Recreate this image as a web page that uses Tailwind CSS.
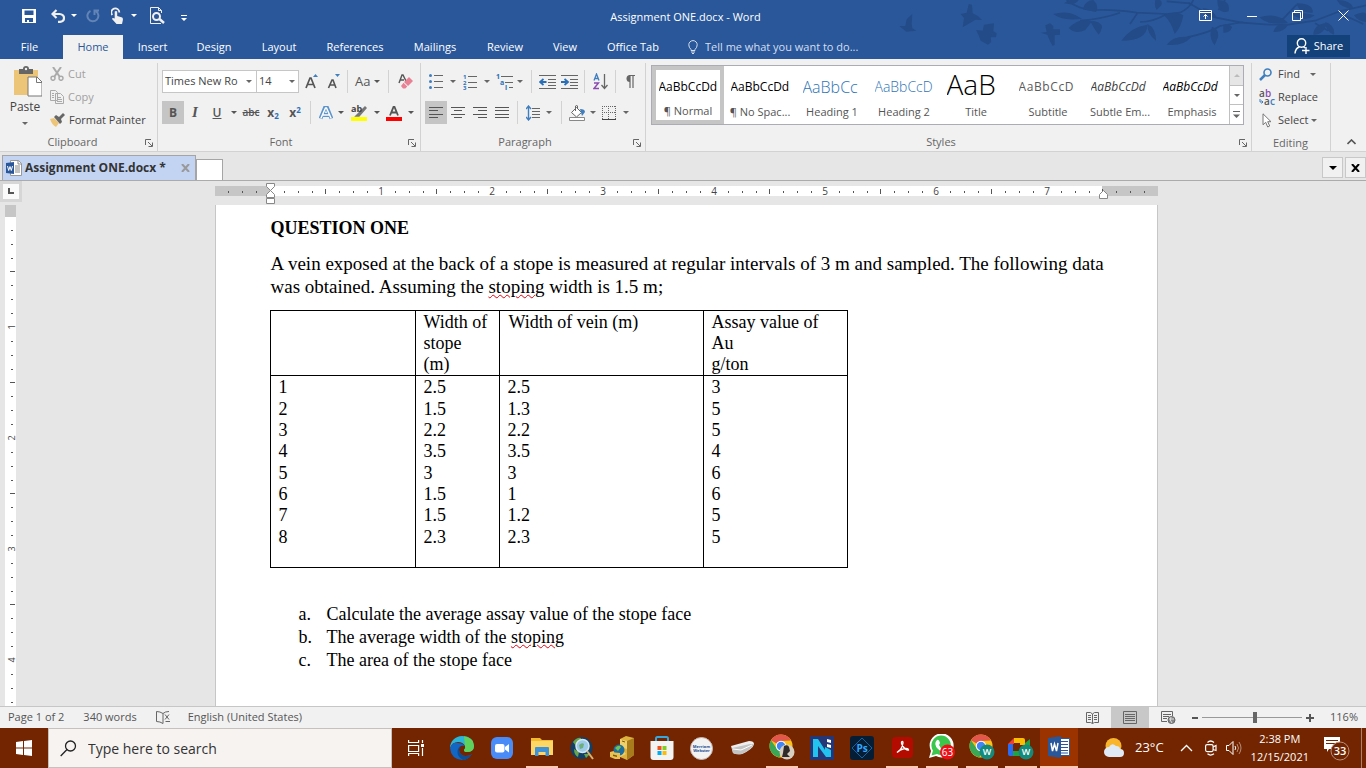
<!DOCTYPE html>
<html lang="en">
<head>
    <meta charset="UTF-8">
    <meta name="viewport" content="width=device-width, initial-scale=1.0">
    <title>Assignment ONE.docx - Word</title>
    <script src="https://cdn.jsdelivr.net/npm/@tailwindcss/browser@4"></script>
</head>
<body class="h-screen flex flex-col overflow-hidden bg-[#e6e6e6] text-[11px] text-[#444444] font-['Open_Sans',sans-serif]">

    <!-- Shared glyphs -->
    <svg class="hidden">
        <symbol id="caret" viewBox="0 0 6 3"><path d="M0 0h6L3 3z" fill="currentColor"/></symbol>
        <symbol id="launcher" viewBox="0 0 8 8"><path d="M.5 6V.5H6M3 3l4 4M7.500 3.500v4h-4" fill="none" stroke="#666" /></symbol>
        <symbol id="chrome" viewBox="0 0 24 24">
            <circle cx="12" cy="12" r="11.500" fill="#fbc116"/>
            <path d="M12 12L2 6.300A11.500 11.500 0 0 1 22 6.500L12 7z" fill="#e2564b"/>
            <path d="M2 6.300L8 15l4 3-1.500 5.400A11.500 11.500 0 0 1 2 6.300z" fill="#3aa757"/>
            <circle cx="12" cy="12" r="5.200" fill="#fff"/><circle cx="12" cy="12" r="4.200" fill="#4285f4"/>
        </symbol>
    </svg>

    <!-- Title bar and ribbon tabs -->
    <header class="relative shrink-0 bg-[#2a579a] text-white">
        <svg class="absolute right-0 top-0" width="506" height="59" viewBox="0 0 1518 177" fill="#224b87" aria-hidden="true">
            <path d="M118 78l18 0 4-20 17-17-2 30 2 14 12 7-16 2-14 1z"/>
            <path d="M302 42l18-4 6-26 10 2 2 26 16 8 12 12-20-1-12 8-26 15 4-28z"/>
            <path d="M348 90l20 2 4-18 30-4-2 24 10 6-2 12-16 0 2 14-10 8-22-12-6-16z"/>
            <path d="M542 98l18-2-4-20 14-6 10 8 0 10 20 0 0 16-16 2 0 28-6 4-8-14-8-20z"/>
            <g fill="none" stroke="#224b87" stroke-width="5">
                <path d="M620 0Q660 32 712 30T830 38L920 42 960 38Q990 24 1000 0"/>
                <path d="M660 62Q730 56 780 38M810 72l22-32M840 66q40 0 80-24M985 8q40 24 80 44l80 16 80 6h60l80-12 74-28 80-18"/>
                <path d="M980 112q70-14 100-34l70-12M1225 66L1270 56 1310 14M1365 70l40 22M920 4l70 6M1440 40l70 32M1075 30l20-30"/>
            </g>
            <path d="M580 42q36-10 64 2l22 12q-60 8-86-14zM612 10q20-16 44-10-10 18-44 10zM668 28q6-26 32-28 18 18 8 36zM626 84q34-34 70-20l-20 26q-30 14-50-6zM690 62q34 0 36 20-4 16-10 22-14-18-26-42z"/>
            <path d="M784 122q30-42 78-48 0 48-78 48zM862 72q26 12 26 50-26-18-26-50zM886 0q24-4 18 16l-14 14q-8-10-4-30zM912 46q36-16 58 0-6 36-26 56-10-36-32-56zM920 134q22-30 74-22-26 28-74 22zM1056 80q22 6 18 32l-10 24q-20-24-8-56zM1072 0q40 0 34 34-34 12-34-34zM1028 24q30 0 42 30-34 0-42-30zM1090 74q22-2 26 8-6 18-26 16z"/>
            <path d="M1198 52q50-16 86 16-60 10-86-16zM1240 96q6-28 46-24-14 26-46 24zM1310 10q50 0 48 28-44 2-48-28zM1290 40q40-6 74 6-30 24-74-6zM1360 104q0-30 40-36-6 36-40 36zM1396 66q30 10 26 38-24-8-26-38zM1430 0q44 0 50 26-36 0-50-26zM1482 46q30-14 36-4v24q-24-2-36-20z"/>
        </svg>

        <div class="relative flex h-[35px] items-center">
            <div class="flex flex-1 items-center pl-[22px] pb-1">
                <button aria-label="Save" class="mr-[15px]">
                    <svg width="14" height="14" viewBox="0 0 14 14"><path d="M0 0h14v14H0zM2.500 1.500V6h9V1.500zM3 9v4h2v-2h2v2h4V9z" fill="#fff" fill-rule="evenodd"/></svg>
                </button>
                <button aria-label="Undo" class="flex items-center gap-[6px] mr-[9px]">
                    <svg width="14" height="14" viewBox="0 0 14 14" fill="none" stroke="#f0f0f0" stroke-width="2.200"><path d="M5.500 1L1.500 5l4 4M2 5h6.500Q13 5.500 13 9t-4 3.800H7"/></svg>
                    <svg width="6" height="3"><use href="#caret"/></svg>
                </button>
                <button aria-label="Repeat" class="mr-[11px]">
                    <svg width="14" height="14" viewBox="0 0 14 14" fill="none" stroke="#6384b6" stroke-width="2"><path d="M4.500 1.800A5.500 5.500 0 1 0 10 2.200M8.500 6V1.500H13"/></svg>
                </button>
                <button aria-label="Touch/Mouse Mode" class="flex items-center gap-[8px] mr-[13px]">
                    <svg width="12" height="17" viewBox="0 0 12 17"><path d="M1.300 8A4 4 0 1 1 8.300 5.500" fill="none" stroke="#f0f0f0" stroke-width="1.800"/><path d="M3.700 4.500q1.300-1.200 2.500 0V9l5 1.500q1 .8.600 3L11 17H5.500L1 12q.2-1.600 2.700-.5z" fill="#f0f0f0"/></svg>
                    <svg width="6" height="3"><use href="#caret"/></svg>
                </button>
                <button aria-label="Print Preview" class="mr-[16px]">
                    <svg width="15" height="17" viewBox="0 0 15 17" fill="none" stroke="#f0f0f0"><path d="M11 16.500H.5V.5h8l3 3V6M8.500.5v3h3"/><circle cx="6.500" cy="9.500" r="3.500" stroke-width="2"/><path d="M9.500 12l4.500 4" stroke-width="2.500"/></svg>
                </button>
                <button aria-label="Customize Quick Access Toolbar" class="pt-1">
                    <svg width="6" height="6" viewBox="0 0 6 6" fill="#fff"><path d="M0 0h6v1H0zM0 3h6L3 6z"/></svg>
                </button>
            </div>
            <h1>Assignment ONE.docx - Word</h1>
            <div class="flex flex-1 items-center justify-end pr-[17px] pb-1 gap-[35px]">
                <button aria-label="Ribbon Display Options"><svg width="13" height="11" viewBox="0 0 13 11" fill="none" stroke="#fff"><path d="M.5.5h12v10H.5zM.5 2.500h12M6.500 9V4.500M4.500 6.500l2-2 2 2"/></svg></button>
                <button aria-label="Minimize"><svg width="10" height="11"><path d="M0 6.500h10" stroke="#fff"/></svg></button>
                <button aria-label="Restore"><svg width="11" height="11" viewBox="0 0 11 11" fill="none" stroke="#fff"><path d="M.5 2.500h8v8h-8zM2.500 2.500v-2h8v8h-2"/></svg></button>
                <button aria-label="Close"><svg width="11" height="11" viewBox="0 0 11 11"><path d="M.5.5l10 10M10.500.5l-10 10" stroke="#fff"/></svg></button>
            </div>
        </div>

        <nav class="relative flex h-[24px] items-stretch">
            <button class="w-[63px] pr-1">File</button>
            <button class="w-[60px] bg-[#f1f1f1] text-[#2a579a]">Home</button>
            <button class="w-[59px]">Insert</button>
            <button class="w-[64px]">Design</button>
            <button class="w-[66px]">Layout</button>
            <button class="w-[86px]">References</button>
            <button class="w-[74px]">Mailings</button>
            <button class="w-[66px]">Review</button>
            <button class="w-[54px]">View</button>
            <button class="w-[82px]">Office Tab</button>
            <label class="flex items-center gap-[7px] pl-[14px] text-[#d4dff0]">
                <svg width="10" height="14" viewBox="0 0 10 14" fill="none" stroke="#d4dff0"><path d="M3 9.500Q.8 7.500.8 4.800a4.200 4.200 0 0 1 8.400 0Q9.200 7.500 7 9.500v1H3zM3 12h4M4 13.500h2"/></svg>
                <input type="text" placeholder="Tell me what you want to do..." aria-label="Tell me what you want to do" class="w-[180px] bg-transparent outline-none placeholder:text-[#d4dff0]">
            </label>
            <button class="ml-auto mr-[16px] mb-[2px] flex w-[63px] items-center justify-center gap-1 bg-[#13417a]">
                <svg width="16" height="16" viewBox="0 0 16 16" fill="none" stroke="#fff" stroke-width="1.400"><circle cx="7.500" cy="5" r="4.200"/><path d="M1 15.500Q1.500 10 5.500 9M9.500 8.800L11 10M8 12.500h7.500M12 9v7"/></svg>
                Share
            </button>
        </nav>
    </header>

    <!-- Ribbon -->
    <section class="flex h-[93px] shrink-0 border-b border-[#d2d2d2] bg-[#f1f1f1] pt-1 text-[#444444]">

        <div class="flex w-[158px] flex-col border-r border-[#d2d2d2]">
            <div class="flex flex-1">
                <button class="flex w-[50px] flex-col items-center self-start">
                    <svg class="mt-[3px] ml-1" width="29" height="31" viewBox="0 0 29 31"><path d="M1 4h24v25H1z" fill="#edc579"/><path d="M6 3h4q0-3 3-3t3 3h4v5H6z" fill="#666"/><circle cx="13" cy="3" r="1.200" fill="#f1f1f1"/><path d="M15 11h9l5 5v14H15z" fill="#fff" stroke="#777"/><path d="M23.500 11v5.500H29" fill="none" stroke="#777"/></svg>
                    <span class="text-[12px] leading-[20px]">Paste</span>
                    <svg class="mt-[5px] text-[#666]" width="6" height="3"><use href="#caret"/></svg>
                </button>
                <div class="flex flex-col pt-[2px] leading-[18px]">
                    <button class="flex h-[18px] mb-[5px] items-center gap-1 text-[#a0a0a0]">
                        <svg width="14" height="14" viewBox="0 0 14 14" fill="none" stroke="#aaa" stroke-width="1.500"><path d="M3 0l6.500 9.500M11 0L4.500 9.500" stroke-width="2"/><circle cx="3" cy="11.300" r="2"/><circle cx="11" cy="11.300" r="2"/></svg>Cut
                    </button>
                    <button class="flex h-[18px] mb-[5px] items-center gap-1 text-[#a0a0a0]">
                        <svg width="14" height="14" viewBox="0 0 14 14" fill="#f1f1f1" stroke="#aaa"><path d="M.5.5h5l2 2v8h-7zM5.500 3.500h5l3 3v7h-8zM2 3.500h2M2 5.500h2M2 7.500h2M7 7.500h4M7 9.500h5M7 11.500h5"/></svg>Copy
                    </button>
                    <button class="flex h-[18px] items-center gap-1 whitespace-nowrap">
                        <svg width="15" height="14" viewBox="0 0 15 14"><path d="M0 6l4-1 5 5-3 4q-4-2-6-8z" fill="#edc579"/><path d="M4 4l2-2 3 2 4-4 2 2-4 4 1 3-2 2z" fill="#666"/></svg>Format Painter
                    </button>
                </div>
            </div>
            <div class="flex h-[17px] items-center text-[#666]"><span class="flex-1 text-center">Clipboard</span><svg class="mr-1" width="8" height="8"><use href="#launcher"/></svg></div>
        </div>

        <div class="flex w-[263px] flex-col border-r border-[#d2d2d2] pl-1">
            <div class="flex flex-1 flex-col pt-[7px] gap-[8px]">
                <div class="flex h-[23px] items-center">
                    <label class="relative flex h-[23px] w-[95px] items-center border border-[#c6c6c6] bg-white">
                        <select aria-label="Font" class="h-full w-[80px] appearance-none overflow-hidden bg-transparent pl-[2px] outline-none"><option>Times New Ro</option></select>
                        <svg class="ml-[3px] text-[#666]" width="6" height="3"><use href="#caret"/></svg>
                    </label>
                    <label class="-ml-px mr-[2px] flex h-[23px] w-[43px] items-center border border-[#c6c6c6] bg-white">
                        <select aria-label="Font Size" class="h-full w-[30px] appearance-none bg-transparent pl-[2px] outline-none"><option>14</option></select>
                        <svg class="ml-[2px] text-[#666]" width="6" height="3"><use href="#caret"/></svg>
                    </label>
                    <button aria-label="Grow Font" class="flex w-[22px] justify-center"><svg width="14" height="15" viewBox="0 0 14 15"><path d="M1 14L5 4h1l4 10M2.500 10.500h6" fill="none" stroke="#555" stroke-width="1.700"/><path d="M8 3h5l-2.500-3z" fill="#3f7fbf"/></svg></button>
                    <button aria-label="Shrink Font" class="flex w-[22px] justify-center"><svg width="14" height="15" viewBox="0 0 14 15"><path d="M1.500 14L5 6h1l3 8M3 11h5" fill="none" stroke="#555" stroke-width="1.600"/><path d="M8 0h5l-2.500 3z" fill="#3f7fbf"/></svg></button>
                    <span class="ml-[2px] h-[23px] w-px bg-[#d2d2d2]"></span>
                    <button class="flex items-center gap-1 pl-[7px] text-[13px] text-[#555]">Aa<svg width="6" height="3"><use href="#caret"/></svg></button>
                    <span class="ml-[8px] h-[23px] w-px bg-[#d2d2d2]"></span>
                    <button aria-label="Clear Formatting" class="ml-[9px]"><svg width="15" height="16" viewBox="0 0 15 16"><path d="M1 9L4 1h1l3 6M2 6h4" fill="none" stroke="#555" stroke-width="1.400"/><path d="M11 3l4 4-5 5-4-4zM5.500 8.700l3.800 3.800-2 2H5l-2-2.500z" fill="#e98195"/></svg></button>
                </div>
                <div class="flex h-[23px] items-center text-[12px] font-semibold text-[#555]">
                    <button class="h-[23px] w-[22px] bg-[#c5c5c5] font-bold">B</button>
                    <button class="w-[22px] font-['Liberation_Serif',serif] text-[15px] italic">I</button>
                    <button class="w-[22px] underline">U</button>
                    <button aria-label="Underline style" class="flex w-[12px] justify-center"><svg width="6" height="3"><use href="#caret"/></svg></button>
                    <button class="w-[22px] text-[10px] line-through">abc</button>
                    <button class="w-[22px] font-bold">x<sub class="text-[8px] text-[#2a6fb5]">2</sub></button>
                    <button class="w-[22px] font-bold">x<sup class="text-[8px] text-[#2a6fb5]">2</sup></button>
                    <span class="ml-[4px] mr-[4px] h-[23px] w-px bg-[#d2d2d2]"></span>
                    <button aria-label="Text Effects" class="flex w-[22px] justify-center"><svg width="14" height="14" viewBox="0 0 14 14" fill="none"><path d="M1.500 12.500L6 1.500h2l4.500 11M4 9h6" stroke="#5b93cc" stroke-width="3.800"/><path d="M1.800 12.500L6.500 2h1l4.700 10.500M4 9h6" stroke="#fff" stroke-width="1.500"/></svg></button>
                    <button aria-label="Text Effects options" class="flex w-[8px] justify-center"><svg width="6" height="3"><use href="#caret"/></svg></button>
                    <button aria-label="Text Highlight Color" class="flex w-[28px] justify-center"><svg width="16" height="16" viewBox="0 0 16 16"><path d="M6 10l8-8 1 1-7 8H5z" stroke="#777" stroke-width="1.500" fill="#777"/><text x="0" y="7" font-size="9" font-weight="700" fill="#444">ab</text><path d="M0 12h16v4H0z" fill="#ff0"/></svg></button>
                    <button aria-label="Highlight colors" class="flex w-[8px] justify-center"><svg width="6" height="3"><use href="#caret"/></svg></button>
                    <button aria-label="Font Color" class="flex w-[26px] justify-center"><svg width="16" height="16" viewBox="0 0 16 16"><path d="M4 10.500L7.500 2h1L12 10.500M5 7.500h6" fill="none" stroke="#555" stroke-width="1.800"/><path d="M0 12h16v4H0z" fill="#f00"/></svg></button>
                    <button aria-label="Font colors" class="flex w-[8px] justify-center"><svg width="6" height="3"><use href="#caret"/></svg></button>
                </div>
            </div>
            <div class="flex h-[17px] items-center text-[#666]"><span class="flex-1 pr-2 text-center">Font</span><svg class="mr-1" width="8" height="8"><use href="#launcher"/></svg></div>
        </div>

        <div class="flex w-[225px] flex-col border-r border-[#d2d2d2] pl-1">
            <div class="flex flex-1 flex-col pt-[7px] gap-[8px] text-[#666]">
                <div class="flex h-[23px] items-center">
                    <button aria-label="Bullets" class="ml-[4px] flex items-center gap-[7px]"><svg width="14" height="15" viewBox="0 0 14 15"><path d="M5 1.500h9M5 7.500h9M5 13.500h9" stroke="#666"/><g fill="#3f7fbf"><circle cx="1.500" cy="1.500" r="1.500"/><circle cx="1.500" cy="7.500" r="1.500"/><circle cx="1.500" cy="13.500" r="1.500"/></g></svg><svg width="6" height="3"><use href="#caret"/></svg></button>
                    <button aria-label="Numbering" class="ml-[7px] flex items-center gap-[7px]"><svg width="14" height="16" viewBox="0 0 14 16"><path d="M5 2.500h9M5 8.500h9M5 13.500h9" stroke="#666"/><g fill="#2a6fb5" font-size="6" font-weight="700"><text x="0" y="5">1</text><text x="0" y="10.500">2</text><text x="0" y="16">3</text></g></svg><svg width="6" height="3"><use href="#caret"/></svg></button>
                    <button aria-label="Multilevel List" class="ml-[6px] flex items-center gap-[4px]"><svg width="17" height="16" viewBox="0 0 17 16"><path d="M5 2.500h12M9 8.500h8M13 13.500h4" stroke="#666"/><g fill="#2a6fb5" font-size="7" font-weight="700"><text x="0" y="5">1</text><text x="4" y="10.500">a</text><text x="9" y="16">i</text></g></svg><svg width="6" height="3"><use href="#caret"/></svg></button>
                    <span class="ml-[8px] h-[23px] w-px bg-[#d2d2d2]"></span>
                    <button aria-label="Decrease Indent" class="ml-[7px]"><svg width="17" height="14" viewBox="0 0 17 14"><path d="M0 .5h17M9 4.500h8M9 7.500h8M9 10.500h8M0 13.500h17" stroke="#666"/><path d="M7.500 7H2M4.500 4L1 7l3.500 3" stroke="#2a6fb5" stroke-width="1.800" fill="none"/></svg></button>
                    <button aria-label="Increase Indent" class="ml-[5px]"><svg width="17" height="14" viewBox="0 0 17 14"><path d="M0 .5h17M9 4.500h8M9 7.500h8M9 10.500h8M0 13.500h17" stroke="#666"/><path d="M0 7h5.500M3.500 4L7 7l-3.500 3" stroke="#2a6fb5" stroke-width="1.800" fill="none"/></svg></button>
                    <span class="ml-[6px] h-[23px] w-px bg-[#d2d2d2]"></span>
                    <button aria-label="Sort" class="ml-[8px]"><svg width="15" height="17" viewBox="0 0 15 17" fill="none"><path d="M1 7.500L3.500 1 6 7.500M2 5.500h3" stroke="#3f7fbf" stroke-width="1.300"/><path d="M1 10h4.500L1 15.500h5" stroke="#8a4bb0" stroke-width="1.400"/><path d="M11.500 1v14M8.500 12l3 3.500 3-3.500" stroke="#666" stroke-width="1.300"/></svg></button>
                    <span class="ml-[7px] h-[23px] w-px bg-[#d2d2d2]"></span>
                    <button aria-label="Show/Hide" class="ml-[9px]"><svg width="10" height="13" viewBox="0 0 10 13"><path d="M4 .5h6M5 0v13M8 0v13" stroke="#666" stroke-width="1.200"/><path d="M5 0a3.500 3.500 0 0 0 0 7z" fill="#666"/></svg></button>
                </div>
                <div class="flex h-[23px] items-center">
                    <button aria-label="Align Left" class="flex h-[23px] w-[22px] items-center justify-center bg-[#c5c5c5]"><svg width="14" height="11"><path d="M0 .5h14M0 3.500h9M0 7.500h14M0 10.500h9" stroke="#555"/></svg></button>
                    <button aria-label="Center" class="flex w-[22px] justify-center"><svg width="14" height="11"><path d="M0 .5h14M3 3.500h8M0 7.500h14M3 10.500h8" stroke="#555"/></svg></button>
                    <button aria-label="Align Right" class="flex w-[22px] justify-center"><svg width="14" height="11"><path d="M0 .5h14M5 3.500h9M0 7.500h14M5 10.500h9" stroke="#555"/></svg></button>
                    <button aria-label="Justify" class="flex w-[22px] justify-center"><svg width="14" height="11"><path d="M0 .5h14M0 3.500h14M0 7.500h14M0 10.500h14" stroke="#555"/></svg></button>
                    <span class="ml-[4px] h-[23px] w-px bg-[#d2d2d2]"></span>
                    <button aria-label="Line Spacing" class="ml-[8px] flex items-center gap-[6px]"><svg width="14" height="16" viewBox="0 0 14 16" fill="none"><path d="M6 3.500h8M6 6.500h8M6 9.500h8M6 12.500h8" stroke="#666"/><path d="M2.500 1v14M0 4l2.500-3L5 4M0 12l2.500 3L5 12" stroke="#3f7fbf" stroke-width="1.400"/></svg><svg width="6" height="3"><use href="#caret"/></svg></button>
                    <span class="ml-[9px] h-[23px] w-px bg-[#d2d2d2]"></span>
                    <button aria-label="Shading" class="ml-[7px] flex items-center gap-[4px]"><svg width="17" height="16" viewBox="0 0 17 16"><path d="M2.500 7.500l5-5 5 5-5 4.500z" fill="#fff" stroke="#666"/><path d="M6.500 6V1q1.500-1.500 2 0v3" fill="none" stroke="#666"/><path d="M11 4q5 0 5 3l-3 4z" fill="#3f7fbf"/><path d="M.5 12.500h15v3H.5z" fill="#fff" stroke="#888"/></svg><svg width="6" height="3"><use href="#caret"/></svg></button>
                    <button aria-label="Borders" class="ml-[6px] flex items-center gap-[7px]"><svg width="14" height="14" viewBox="0 0 14 14"><path d="M.5 0v13M13.500 0v13M6.500 0v13M0 .5h14M0 6.500h14" stroke="#666" stroke-dasharray="1 1"/><path d="M0 13.500h14" stroke="#444"/></svg><svg width="6" height="3"><use href="#caret"/></svg></button>
                </div>
            </div>
            <div class="flex h-[17px] items-center text-[#666]"><span class="flex-1 pr-2 text-center">Paragraph</span><svg class="mr-1" width="8" height="8"><use href="#launcher"/></svg></div>
        </div>

        <div class="flex min-w-0 flex-1 flex-col border-r border-[#d2d2d2] pl-[5px] pt-[2px]">
            <div class="mr-[7px] flex h-[60px] border border-[#abadb3] bg-white text-[#666]">
                <div class="flex flex-1 overflow-hidden leading-[18px] text-black">
                    <button class="flex w-[72px] flex-col items-center border-4 border-[#c5c5c5] pt-[8px]"><span class="h-[25px] w-[59px] overflow-hidden text-left text-[12px] whitespace-nowrap">AaBbCcDd</span><span class="text-[#555]">¶ Normal</span></button>
                    <button class="flex w-[72px] flex-col items-center pt-[12px]"><span class="h-[25px] w-[59px] overflow-hidden text-left text-[12px] whitespace-nowrap">AaBbCcDd</span><span class="whitespace-nowrap text-[#555]">¶ No Spac...</span></button>
                    <button class="flex w-[72px] flex-col items-center pt-[12px]"><span class="h-[25px] w-[59px] overflow-hidden text-left text-[16px] font-light whitespace-nowrap text-[#2e74b5]">AaBbCc</span><span class="text-[#555]">Heading 1</span></button>
                    <button class="flex w-[72px] flex-col items-center pt-[12px]"><span class="h-[25px] w-[59px] overflow-hidden text-left text-[14px] font-light whitespace-nowrap text-[#2e74b5]">AaBbCcD</span><span class="text-[#555]">Heading 2</span></button>
                    <button class="flex w-[72px] flex-col items-center"><span class="h-[37px] w-[59px] overflow-hidden text-left text-[28px] leading-[36px] font-light whitespace-nowrap">AaB</span><span class="text-[#555]">Title</span></button>
                    <button class="flex w-[72px] flex-col items-center pt-[12px]"><span class="h-[25px] w-[59px] overflow-hidden text-left text-[12px] tracking-wider whitespace-nowrap text-[#5a5a5a]">AaBbCcD</span><span class="text-[#555]">Subtitle</span></button>
                    <button class="flex w-[72px] flex-col items-center pt-[12px]"><span class="h-[25px] w-[59px] overflow-hidden text-left text-[12px] italic whitespace-nowrap text-[#404040]">AaBbCcDd</span><span class="whitespace-nowrap text-[#555]">Subtle Em...</span></button>
                    <button class="flex w-[72px] flex-col items-center pt-[12px]"><span class="h-[25px] w-[59px] overflow-hidden text-left text-[12px] italic whitespace-nowrap">AaBbCcDd</span><span class="text-[#555]">Emphasis</span></button>
                </div>
                <div class="flex w-[14px] flex-col divide-y divide-[#c0c0c0] border-l border-[#c0c0c0]">
                    <button aria-label="Row up" class="flex flex-1 items-center justify-center bg-[#e6e6e6] text-[#bbb]"><svg class="rotate-180" width="6" height="3"><use href="#caret"/></svg></button>
                    <button aria-label="Row down" class="flex flex-1 items-center justify-center"><svg width="6" height="3"><use href="#caret"/></svg></button>
                    <button aria-label="More styles" class="flex flex-1 items-center justify-center"><svg width="7" height="7" viewBox="0 0 7 7" fill="#666"><path d="M0 0h7v1H0zM0 3.500h7L3.500 7z"/></svg></button>
                </div>
            </div>
            <div class="mt-auto flex h-[17px] items-center text-[#666]"><span class="flex-1 pr-2 text-center">Styles</span><svg class="mr-1" width="8" height="8"><use href="#launcher"/></svg></div>
        </div>

        <div class="flex w-[79px] flex-col border-r border-[#d2d2d2] pl-[7px]">
            <div class="flex flex-1 flex-col gap-[5px] pt-[2px]">
                <button class="flex h-[18px] items-center gap-[5px]"><svg width="14" height="13" viewBox="0 0 14 13" fill="none" stroke="#3f7fbf"><circle cx="8.500" cy="4.500" r="3.500" stroke-width="1.600"/><path d="M6 7L1 12" stroke-width="2.500"/></svg>Find<svg class="ml-[5px] text-[#666]" width="6" height="3"><use href="#caret"/></svg></button>
                <button class="flex h-[18px] items-center gap-[2px]"><svg width="17" height="17" viewBox="0 0 17 17" font-size="10" font-weight="600"><text x="0" y="8" fill="#555">a</text><text x="6" y="8" fill="#8a4bb0">b</text><text x="5" y="16" fill="#555">a</text><text x="11" y="16" fill="#3f7fbf">c</text><path d="M1 10v3h3M2.500 11.500L4 13l-1.500 1.500" fill="none" stroke="#3f7fbf"/></svg>Replace</button>
                <button class="flex h-[18px] items-center gap-[5px] pl-[3px]"><svg width="11" height="15" viewBox="0 0 11 15"><path d="M1 .8v11l2.700-2.500 2 4.700 2-1-2-4.300H9z" fill="#fff" stroke="#777"/></svg>Select<svg class="-ml-[2px] text-[#666]" width="6" height="3"><use href="#caret"/></svg></button>
            </div>
            <div class="h-[17px] pr-[8px] text-center leading-[17px] text-[#666]">Editing</div>
        </div>
        <button aria-label="Collapse the Ribbon" class="flex w-[35px] items-end justify-center pb-[6px] pl-[6px]"><svg width="9" height="6"><path d="M.5 5l4-4 4 4" fill="none" stroke="#555" stroke-width="1.600"/></svg></button>
    </section>

    <!-- Open document tabs -->
    <nav class="flex h-[29px] shrink-0 items-end border-b border-[#ababab] pl-[2px]">
        <div class="flex h-[25px] w-[194px] items-center border border-b-0 border-[#a5a5a5] bg-[#c2d4f2] pl-[3px] text-[12px] font-bold text-[#333]">
            <svg width="16" height="16" viewBox="0 0 16 16"><path d="M4.500.5h8l3 3v12h-11z" fill="#fff" stroke="#999"/><path d="M12 .5V4h3.500M9 6h5M9 8h5M9 10h5M9 12h5" stroke="#888" fill="none"/><path d="M0 3l8-1v12l-8-1z" fill="#2a579a"/><path d="M1.500 6l1.200 4.500L4 6.500l1.300 4L6.500 6" fill="none" stroke="#fff"/></svg>
            <button class="ml-[3px] whitespace-nowrap">Assignment ONE.docx *</button>
            <button aria-label="Close document" class="mr-[5px] ml-auto"><svg width="9" height="8"><path d="M1 0l7 8M8 0L1 8" stroke="#999" stroke-width="2"/></svg></button>
        </div>
        <button aria-label="New document" class="h-[21px] w-[27px] border border-b-0 border-[#a5a5a5] bg-white"></button>
        <button aria-label="Document list" class="mr-[2px] mb-[2px] ml-auto flex h-[21px] w-[21px] items-center justify-center border border-[#c8c8c8] bg-[#f1f1f1] text-black"><svg width="8" height="4"><use href="#caret"/></svg></button>
        <button aria-label="Close tab" class="mb-[2px] flex h-[21px] w-[21px] items-center justify-center border border-[#c8c8c8] bg-[#f1f1f1]"><svg width="9" height="8"><path d="M1 0l7 8M8 0L1 8" stroke="#000" stroke-width="2"/></svg></button>
    </nav>

    <!-- Document area: vertical ruler on the left, page in the middle -->
    <main class="flex min-h-0 flex-1">
        <div class="flex w-[22px] shrink-0 flex-col">
            <button aria-label="Tab selector" class="mb-[3px] flex h-[21px] w-[22px] items-center justify-center border-3 border-[#d6d6d6] bg-[#fafafa]"><svg width="6" height="6"><path d="M1 0v5h5" fill="none" stroke="#555" stroke-width="2"/></svg></button>
            <svg class="ml-[5px]" width="11" height="502" aria-hidden="true">
                <defs>
                    <pattern id="vticks" width="11" height="111" y="11" patternUnits="userSpaceOnUse">
                        <path d="M6 14.500h2M6 28.500h2M6 42.500h2M5 55.500h5M6 69.500h2M6 83.500h2M6 97.500h2" stroke="#555"/>
                    </pattern>
                </defs>
                <path d="M0 0h11v502H0z" fill="#fff"/><path d="M0 0h11v12H0z" fill="#c6c6c6"/>
                <path d="M0 13h11v489H0z" fill="url(#vticks)"/>
                <g font-size="9" fill="#444" text-anchor="middle">
                    <text transform="translate(10 122) rotate(-90)">1</text>
                    <text transform="translate(10 233) rotate(-90)">2</text>
                    <text transform="translate(10 344) rotate(-90)">3</text>
                    <text transform="translate(10 455) rotate(-90)">4</text>
                </g>
            </svg>
        </div>

        <div class="flex min-w-0 flex-1 flex-col items-center pr-[16px]">
            <svg class="shrink-0" width="943" height="24" aria-hidden="true">
                <defs>
                    <pattern id="hticks" x="55" width="111" height="24" patternUnits="userSpaceOnUse">
                        <path d="M14.500 10v2M28.500 10v2M42.500 10v2M55.500 8v5M69.500 10v2M83.500 10v2M97.500 10v2" stroke="#555"/>
                    </pattern>
                </defs>
                <path d="M0 5h943v10H0z" fill="#c6c6c6"/><path d="M55 5h832v10H55z" fill="#fff"/>
                <path d="M0 5h943v10H0z" fill="url(#hticks)"/>
                <g font-size="10" fill="#444" text-anchor="middle">
                    <text x="166" y="14">1</text><text x="277" y="14">2</text><text x="388" y="14">3</text><text x="499" y="14">4</text>
                    <text x="610" y="14">5</text><text x="721" y="14">6</text><text x="832" y="14">7</text>
                </g>
                <path d="M51.500 2.500h8v3l-4 4-4-4zM51.500 16.500v-3l4-4 4 4v3zM51.500 17.500h8v5h-8zM884.500 17.500v-4l4-4 4 4v4z" fill="#fff" stroke="#888"/>
            </svg>
            <article class="min-h-0 w-[943px] flex-1 overflow-hidden border-x border-[#c6c6c6] bg-white px-[55px] pt-[12px] font-['Liberation_Serif',serif] text-[19px] leading-[23px] text-black">
                <h2 class="mb-[12px] text-[18px] font-bold">QUESTION ONE</h2>
                <p class="whitespace-nowrap">A vein exposed at the back of a stope is measured at regular intervals of 3 m and sampled. The following data<br>
                    was obtained. Assuming the <span class="underline decoration-red-600 decoration-wavy decoration-1">stoping</span> width is 1.5 m;</p>
                <table class="-ml-px mt-[12px] w-[578px] table-fixed border-collapse border border-black text-left align-top text-[18px] leading-[21px]">
                    <colgroup><col class="w-[145px]"><col class="w-[84px]"><col class="w-[204px]"><col class="w-[144px]"></colgroup>
                    <thead>
                        <tr class="h-[65px] border-b border-black align-top">
                            <th class="border-r border-black"></th>
                            <th class="border-r border-black pt-px pl-[8px] font-normal">Width of<br>stope<br>(m)</th>
                            <th class="border-r border-black pt-px pl-[9px] font-normal">Width of vein (m)</th>
                            <th class="pt-px pl-[8px] font-normal">Assay value of<br>Au<br>g/ton</th>
                        </tr>
                    </thead>
                    <tbody class="leading-[19px] [&_td]:border-r [&_td]:border-black [&_td]:pt-[2px] [&_td]:pl-[8px] [&_tr]:h-[21px] [&_tr:nth-child(3n+1)]:h-[22px]">
                        <tr><td>1</td><td>2.5</td><td>2.5</td><td>3</td></tr>
                        <tr><td>2</td><td>1.5</td><td>1.3</td><td>5</td></tr>
                        <tr><td>3</td><td>2.2</td><td>2.2</td><td>5</td></tr>
                        <tr><td>4</td><td>3.5</td><td>3.5</td><td>4</td></tr>
                        <tr><td>5</td><td>3</td><td>3</td><td>6</td></tr>
                        <tr><td>6</td><td>1.5</td><td>1</td><td>6</td></tr>
                        <tr><td>7</td><td>1.5</td><td>1.2</td><td>5</td></tr>
                        <tr><td>8</td><td>2.3</td><td>2.3</td><td>5</td></tr>
                        <tr><td></td><td></td><td></td><td></td></tr>
                    </tbody>
                </table>
                <ol class="mt-[35px] pl-[28px] text-[18px]">
                    <li class="flex"><span class="w-[28px]">a.</span>Calculate the average assay value of the stope face</li>
                    <li class="flex"><span class="w-[28px]">b.</span><span>The average width of the <span class="underline decoration-red-600 decoration-wavy decoration-1">stoping</span></span></li>
                    <li class="flex"><span class="w-[28px]">c.</span>The area of the stope face</li>
                </ol>
            </article>
        </div>
    </main>

    <!-- Status bar -->
    <footer class="flex h-[22px] shrink-0 items-center border-t border-[#c6c6c6] bg-[#f1f1f1] pl-[8px] text-[#555]">
        <span class="mr-[19px]">Page 1 of 2</span>
        <span class="mr-[19px]">340 words</span>
        <svg class="mr-[17px]" width="15" height="13" viewBox="0 0 15 13" fill="none" stroke="#666"><path d="M7 2.500Q4 .5.500.5v10Q4 10.500 7 12.500M7 12.500v-10Q9 .5 13 .5M9.500 10.500H14M9 3.500l4 5M13 3.500l-4 5"/></svg>
        <span>English (United States)</span>
        <div class="ml-auto flex h-full items-center">
            <button aria-label="Read Mode" class="mr-[12px]"><svg width="13" height="12" viewBox="0 0 13 12" fill="none" stroke="#666"><path d="M6.500 2v9.500M.5.500h4l2 1.500 2-1.500h4v10h-4l-2 1-2-1h-4zM2 3.500h3M2 5.500h3M2 7.500h3M8 3.500h3M8 5.500h3M8 7.500h3"/></svg></button>
            <button aria-label="Print Layout" class="mr-[12px] flex h-full w-[38px] items-center justify-center bg-[#c8c8c8]"><svg width="14" height="13" viewBox="0 0 14 13" fill="none" stroke="#666"><path d="M.5.5h13v12H.5zM2 3.500h10M2 5.500h10M2 7.500h10M2 9.500h10"/></svg></button>
            <button aria-label="Web Layout" class="mr-[16px]"><svg width="15" height="13" viewBox="0 0 15 13" fill="none" stroke="#666"><path d="M6 10.500H.5V.5h11V5M2 3.500h8M2 5.500h6M2 7.500h4"/><circle cx="10.500" cy="9" r="3.500" fill="#888"/><path d="M8 8h5M10 6q-2 3 1 6" stroke="#ddd"/></svg></button>
            <button aria-label="Zoom Out" class="mr-[4px]"><svg width="6" height="8"><path d="M0 4h6" stroke="#555" stroke-width="2"/></svg></button>
            <input type="range" aria-label="Zoom" min="10" max="210" value="116" class="h-[12px] w-[100px] appearance-none bg-[linear-gradient(#999,#999)] bg-[length:100%_1px] bg-center bg-no-repeat [&::-webkit-slider-thumb]:h-[11px] [&::-webkit-slider-thumb]:w-[4px] [&::-webkit-slider-thumb]:appearance-none [&::-webkit-slider-thumb]:bg-[#666]">
            <button aria-label="Zoom In" class="mr-[16px] ml-[4px]"><svg width="8" height="8"><path d="M0 4h8M4 0v8" stroke="#555" stroke-width="2"/></svg></button>
            <span class="mr-[8px]">116%</span>
        </div>
    </footer>

    <!-- Windows taskbar -->
    <div class="flex h-[40px] shrink-0 items-stretch bg-[#722500] text-white">
        <button aria-label="Start" class="flex w-[48px] items-center justify-center"><svg width="16" height="16" viewBox="0 0 16 16" fill="#fff"><path d="M0 2l7-1v6.500H0zM8 .9L16 0v7.500H8zM0 8.500h7V15l-7-1zM8 8.500h8V16l-8-1z"/></svg></button>
        <label class="flex w-[344px] items-center gap-[11px] border border-[#c8c0bc] bg-[#f6f3f1] pl-[11px] text-[#333]">
            <svg width="17" height="17" viewBox="0 0 17 17" fill="none" stroke="#222" stroke-width="1.300"><circle cx="10.500" cy="6" r="5"/><path d="M7 9.500L.7 16"/></svg>
            <input type="text" placeholder="Type here to search" aria-label="Search" class="w-[200px] bg-transparent text-[14px] outline-none placeholder:text-[#333]">
        </label>
        <button aria-label="Task View" class="flex w-[50px] items-center justify-center pr-[2px]"><svg width="17" height="16" viewBox="0 0 17 16" fill="none" stroke="#fff" stroke-width="1.200"><path d="M.6 0v2.500h10V0M.6 5.500h10v6H.6zM.6 16v-2.500h10V16M14.500 0v3M14.500 8v8"/><path d="M13 4h3v3h-3z" fill="#fff" stroke="none"/></svg></button>

        <button aria-label="Edge" class="flex w-[40px] items-center justify-center"><svg width="24" height="24" viewBox="0 0 24 24"><path d="M0 12A12 12 0 0 1 12 0q11 0 12 9.500Q24 16 17 16q-3 0-3-2 2-1.500 1-4-2-4-7-4-6 0-8 6z" fill="#2bb5d8"/><path d="M14 .2Q24 2 24 10q0 6-7 6-3 0-3-2 2-1.500 1-4z" fill="#5fd25c"/><path d="M0 12q2-6 8-5 5 0 6.500 3Q9 9 9 14q1 6 7 6 4 0 6-2-4 6-10 6Q1 23 0 12z" fill="#1266c4"/><path d="M9 14q1 6 7 6 4 0 6-2-4 6-9 6-6-3-5.500-9 .5-4 4-5Q9 11 9 14z" fill="#0d4d95"/></svg></button>
        <button aria-label="Zoom Meetings" class="flex w-[40px] items-center justify-center"><svg width="22" height="22" viewBox="0 0 22 22"><rect width="22" height="22" rx="6" fill="#4a8cf7"/><rect x="4" y="7" width="9.500" height="8.500" rx="2" fill="#fff"/><path d="M14 10l4-3v8.500l-4-3z" fill="#fff"/></svg></button>
        <button aria-label="File Explorer" class="mx-[4px] flex w-[32px] items-center justify-center border-b-2 border-[#ffc9b3]"><svg width="22" height="20" viewBox="0 0 22 20"><path d="M0 1h9l2 2h11v15H0z" fill="#f5b92e"/><path d="M0 4h22v14H0z" fill="#fcd766"/><path d="M4 11q0-1 1-1h12q1 0 1 1v8h-3.500v-4h-7v4H4z" fill="#3f92d6"/></svg></button>
        <button aria-label="ArcMap" class="flex w-[40px] items-center justify-center"><svg width="24" height="24" viewBox="0 0 24 24"><circle cx="11.500" cy="12" r="11" fill="#123f66"/><path d="M3 6q4-5 8-4l1 4-6 4zM4 13l5 3-1 5q-4-2-4-8zM14 18l6 0-4 4z" fill="#69a34b"/><circle cx="12.500" cy="10" r="6.500" fill="#9bcbe8" stroke="#d7e6ef" stroke-width="1.500"/><path d="M9 9q3-3 5-1l-1 4-3 1z" fill="#6fae7b"/><path d="M17 15l6 8" stroke="#d9b26f" stroke-width="2"/></svg></button>
        <button aria-label="ArcCatalog" class="flex w-[40px] items-center justify-center"><svg width="25" height="24" viewBox="0 0 25 24"><path d="M10 3l6-3 8 2v17l-7 5-7-3z" fill="#ddb33e"/><path d="M17 5l7-3v17l-7 5z" fill="#a87c1d"/><path d="M10 3l7 2v8l-7-2z" fill="#f0d06b"/><path d="M12 5l3 1" stroke="#7b5a10"/><path d="M0 16l12-3 4 5-10 5z" fill="#efd068"/><circle cx="9" cy="14" r="5.500" fill="#1e6f9e"/><path d="M5 12q4-4 6-1l-3 4z" fill="#6fc15b"/><path d="M0 16l10 1v6H5l-5-2z" fill="#e7c252"/><path d="M3 18.500l4 1v1.500l-4-1z" fill="#7b5a10"/></svg></button>
        <button aria-label="Microsoft Store" class="flex w-[39px] items-center justify-center"><svg width="24" height="24" viewBox="0 0 24 24"><path d="M6 6V2.500Q6 1 7.500 1h9Q18 1 18 2.500V6" fill="none" stroke="#35a8e0" stroke-width="2"/><path d="M.5 5h23v16q0 3-3 3h-17q-3 0-3-3z" fill="#f3f3f3"/><path d="M7.500 10h4v4h-4z" fill="#f1511b"/><path d="M12.500 10h4v4h-4z" fill="#80cc28"/><path d="M7.500 15h4v4h-4z" fill="#00adef"/><path d="M12.500 15h4v4h-4z" fill="#fbbc09"/></svg></button>
        <button aria-label="Dictionary" class="flex w-[41px] items-center justify-center"><svg width="23" height="23" viewBox="0 0 23 23"><circle cx="11.500" cy="11.500" r="11" fill="#f2f2f2" stroke="#c9b7b1"/><g font-size="4" font-weight="700" fill="#1e4f90" text-anchor="middle"><text x="11.500" y="11">Merriam</text><text x="11.500" y="15">Webster</text></g></svg></button>
        <button aria-label="Scanner" class="flex w-[40px] items-center justify-center"><svg width="23" height="14" viewBox="0 0 23 14"><path d="M0 5L18 0q5 0 5 3-1 5-12 10-6 1-9-1z" fill="#eee"/><path d="M1 7l18-4 4 0q-2 5-12 10-6 1-9-1z" fill="#c4c4c4"/><path d="M2 8l8 1 11-5" fill="none" stroke="#fff"/></svg></button>
        <button aria-label="Chrome" class="mx-[4px] flex w-[32px] items-center justify-center border-b-2 border-[#ffc9b3]"><svg width="26" height="26" viewBox="0 0 26 26"><use href="#chrome" width="24" height="24"/><circle cx="18" cy="18" r="7.500" fill="#d8cfc0"/><path d="M15 12q4-2 5 1l1 4-3 3 3 3h-8l1-4z" fill="#302b28"/></svg></button>
        <button aria-label="Nitro" class="flex w-[40px] items-center justify-center"><svg width="24" height="24" viewBox="0 0 24 24"><path d="M0 0h24v24H0z" fill="#253777"/><path d="M3 3h5l7 11v-3l6 3v7h-5L8 10v11H3z" fill="#22c3ef"/><path d="M17 3l4 1v3l-4-1zM17 8l4 1v3l-4-1z" fill="#fff"/></svg></button>
        <button aria-label="Photoshop" class="flex w-[40px] items-center justify-center"><svg width="24" height="24" viewBox="0 0 24 24"><rect width="24" height="24" rx="3" fill="#061e35"/><path d="M12 2l10 10-10 10L2 12z" fill="none" stroke="#16639c"/><text x="12" y="16" font-size="10" font-weight="700" text-anchor="middle" fill="#31a8ff">Ps</text></svg></button>
        <button aria-label="Acrobat Reader" class="mx-[4px] flex w-[32px] items-center justify-center border-b-2 border-[#ffc9b3]"><svg width="21" height="21" viewBox="0 0 21 21"><rect width="21" height="21" rx="4" fill="#b30b00"/><path d="M5 15.500q5-3 6-9.500 0-2-1-1.500-1.500 1 1 5 3 4 5.500 3.500 0-2-4-1.500-5 1-7.500 4z" fill="none" stroke="#fff" stroke-width="1.300"/></svg></button>
        <button aria-label="WhatsApp" class="mx-[4px] flex w-[32px] items-center justify-center border-b-2 border-[#ffc9b3]"><svg width="26" height="26" viewBox="0 0 26 26"><path d="M0 24l2-7A12 12 0 1 1 7 22z" fill="#fff"/><path d="M2.500 21.500l1.500-5A9.700 9.700 0 1 1 8 20z" fill="#3cc64c"/><path d="M8 6q2-1 3 3l-1 2q1 3 4 4l2-1q3 1 2 3-4 3-9-2T8 6z" fill="#fff"/><circle cx="18.500" cy="18" r="7.500" fill="#f00f17"/><text x="18.500" y="22" font-size="10" text-anchor="middle" fill="#fff">63</text></svg></button>
        <button aria-label="Chrome profile W" class="mx-[4px] flex w-[32px] items-center justify-center border-b-2 border-[#ffc9b3]"><svg width="26" height="26" viewBox="0 0 26 26"><use href="#chrome" width="24" height="24"/><circle cx="18" cy="18" r="7.500" fill="#138a7b"/><text x="18" y="21" font-size="9" font-weight="600" text-anchor="middle" fill="#fff">W</text></svg></button>
        <button aria-label="Google Meet" class="mx-[3px] flex w-[32px] items-center justify-center border-b-2 border-[#ffc9b3]"><svg width="26" height="26" viewBox="0 0 26 26"><path d="M0 10h5v12H2q-2 0-2-2z" fill="#2a6df4"/><path d="M0 10l6-6v6z" fill="#ea4335"/><path d="M6 4h9q2 0 2 2v5h-5V9H6z" fill="#fbbc04"/><path d="M5 17h12v5H5zM17 9l5-4v14l-5-5z" fill="#1ea446"/><circle cx="18" cy="18" r="7.500" fill="#138a7b"/><text x="18" y="21" font-size="9" font-weight="600" text-anchor="middle" fill="#fff">W</text></svg></button>
        <button aria-label="Word" class="flex w-[38px] items-center justify-center border-b-2 border-[#ffc9b3] bg-[#9a3300]"><svg width="22" height="22" viewBox="0 0 22 22"><path d="M12 2.500h9.500v17H12z" fill="#fff" stroke="#2a579a"/><path d="M13 5.500h7M13 8.500h7M13 11.500h7M13 14.500h7M13 17h7" stroke="#2a579a"/><path d="M0 2l13-2v22L0 20z" fill="#2a579a"/><path d="M3 7l1.500 8L6.500 8l2 7L10 7" fill="none" stroke="#fff" stroke-width="1.500"/></svg></button>

        <div class="ml-auto flex items-center">
            <button class="mr-[16px] flex items-center gap-[10px] text-[13px]"><svg width="21" height="20" viewBox="0 0 21 20"><circle cx="9.500" cy="8" r="8" fill="#f9b52c"/><path d="M5 19a5 5 0 0 1 0-10Q8 4 12 8q4 0 4 3 4 0 4 4t-4 4z" fill="#dfeaf6"/></svg>23°C</button>
            <button aria-label="Show hidden icons" class="mr-[12px]"><svg width="13" height="8"><path d="M1 7l5.500-5.500L12 7" fill="none" stroke="#fff" stroke-width="1.300"/></svg></button>
            <button aria-label="Meet Now" class="mr-[9px]"><svg width="12" height="16" viewBox="0 0 12 16" fill="none" stroke="#fff" stroke-width="1.200"><rect x=".6" y="4.600" width="7.500" height="7" rx="1.500"/><path d="M8 7l3-1.500v5L8 9.500M2.500 2.500Q5.500-.5 9 2.500M2.500 13.800q3 2.500 6.500 0"/></svg></button>
            <button aria-label="Volume" class="mr-[9px]"><svg width="16" height="14" viewBox="0 0 16 14" fill="none" stroke="#fff"><path d="M.5 4.500H3l4-4v13l-4-4H.5zM9 5q1.500 2 0 4"/><path d="M11 3q3 4 0 8M13 1q4 6 0 12" stroke="#b78f7c"/></svg></button>
            <button class="mr-[15px] text-center leading-[18px]">2:38 PM<br>12/15/2021</button>
            <button aria-label="33 new notifications" class="mr-[11px]"><svg width="26" height="26" viewBox="0 0 26 26"><path d="M0 2h16v12H5l-2 3v-3H0z" fill="#fff"/><path d="M2 5.500h12M2 8.500h12" stroke="#722500"/><circle cx="16" cy="16" r="9" fill="#722500" stroke="#b78f7c"/><text x="16" y="20" font-size="11" font-weight="600" text-anchor="middle" fill="#fff">33</text></svg></button>
            <span class="h-[40px] w-[5px] border-l border-[#a98270]"></span>
        </div>
    </div>
</body>
</html>
